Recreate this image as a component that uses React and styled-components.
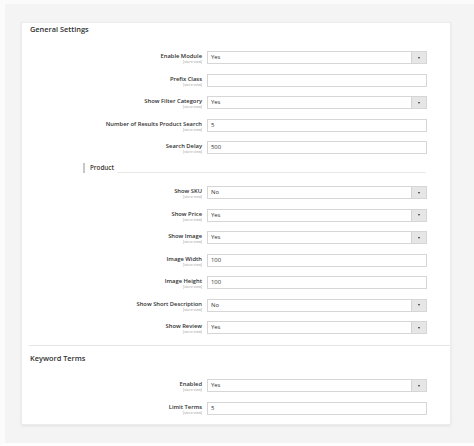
import React from "react";
import styled, { createGlobalStyle } from "styled-components";

const GlobalStyle = createGlobalStyle`
  html, body {
    margin: 0;
    padding: 0;
    background: #fbfbfb;
  }
  body {
    font-family: "Open Sans", "Liberation Sans", sans-serif;
    color: #303030;
  }
`;

const general = [
  { label: "Enable Module", type: "select", value: "Yes" },
  { label: "Prefix Class", type: "text", value: "" },
  { label: "Show Filter Category", type: "select", value: "Yes" },
  { label: "Number of Results Product Search", type: "text", value: "5" },
  { label: "Search Delay", type: "text", value: "500" },
];

const product = [
  { label: "Show SKU", type: "select", value: "No" },
  { label: "Show Price", type: "select", value: "Yes" },
  { label: "Show Image", type: "select", value: "Yes" },
  { label: "Image Width", type: "text", value: "100" },
  { label: "Image Height", type: "text", value: "100" },
  { label: "Show Short Description", type: "select", value: "No" },
  { label: "Show Review", type: "select", value: "Yes" },
];

const keyword = [
  { label: "Enabled", type: "select", value: "Yes" },
  { label: "Limit Terms", type: "text", value: "5" },
];

const Field = ({ label, type, value }) => (
  <Row>
    <LabelBox>
      <Label>{label}</Label>
      <Scope>[store view]</Scope>
    </LabelBox>
    {type === "select" ? (
      <Select>
        <Value>{value}</Value>
        <Arrow>
          <Dot />
        </Arrow>
      </Select>
    ) : (
      <Input>
        <Value>{value}</Value>
      </Input>
    )}
  </Row>
);

const App = () => {
  return (
    <>
      <GlobalStyle />
      <Page>
        <Card>
          <Title>General Settings</Title>
          <Fields $top={16}>
            {general.map(f => (
              <Field key={f.label} {...f} />
            ))}
          </Fields>
          <SubHeading>
            <SubTitle>Product</SubTitle>
            <SubLine />
          </SubHeading>
          <Fields $top={13.5}>
            {product.map(f => (
              <Field key={f.label} {...f} />
            ))}
          </Fields>
          <Divider />
          <Title $top={6}>Keyword Terms</Title>
          <Fields $top={15}>
            {keyword.map(f => (
              <Field key={f.label} {...f} />
            ))}
          </Fields>
        </Card>
      </Page>
    </>
  );
};

const Page = styled.div`
  width: 474px;
  height: 446px;
  box-sizing: border-box;
  margin: 0;
  border-top: 4px solid #fbfbfb;
  border-left: 5px solid #fbfbfb;
  border-bottom: 3px solid #fdfdfd;
  background: #f4f4f4;
  padding: 18px 0 0 16px;
  overflow: hidden;
`;

const Card = styled.div`
  width: 430px;
  box-sizing: border-box;
  padding-bottom: 9.5px;
  background: #fff;
  border: 1px solid #ececec;
  border-radius: 2px;
  box-shadow: 0 1px 3px rgba(0, 0, 0, 0.08);
`;

const Title = styled.div`
  margin-top: ${p => p.$top || 0}px;
  padding-left: 8px;
  height: 12px;
  line-height: 12px;
  font-size: 7.4px;
  font-weight: 600;
  color: #303030;
`;

const Fields = styled.div`
  margin-top: ${p => p.$top}px;
  display: flex;
  flex-direction: column;
  gap: 9.5px;
`;

const Row = styled.div`
  display: grid;
  grid-template-columns: 180px 220px;
  column-gap: 5px;
  height: 13px;
`;

const LabelBox = styled.div`
  display: flex;
  flex-direction: column;
  align-items: flex-end;
  padding-top: 1px;
`;

const Label = styled.span`
  font-size: 5.8px;
  line-height: 8px;
  font-weight: 600;
  color: #303030;
  white-space: nowrap;
`;

const Scope = styled.span`
  font-size: 3.5px;
  line-height: 4px;
  color: #9a9a9a;
  white-space: nowrap;
`;

const Input = styled.div`
  height: 13px;
  box-sizing: border-box;
  border: 1px solid #d6d6d6;
  background: #fff;
  display: flex;
  align-items: center;
`;

const Select = styled(Input)`
  justify-content: space-between;
`;

const Value = styled.span`
  padding-left: 3px;
  font-size: 5.9px;
  line-height: 11px;
  color: #303030;
`;

const Arrow = styled.div`
  width: 14px;
  height: 11px;
  background: #e6e6e6;
  border-left: 1px solid #d3d3d3;
  display: flex;
  align-items: center;
  justify-content: center;
`;

const Dot = styled.span`
  width: 0;
  height: 0;
  border-left: 1.5px solid transparent;
  border-right: 1.5px solid transparent;
  border-top: 2px solid #333;
`;

const SubHeading = styled.div`
  margin: 8.5px 24px 0 61px;
  display: flex;
  align-items: flex-end;
  height: 10px;
`;

const SubTitle = styled.div`
  border-left: 2px solid #c8c8c8;
  padding-left: 5px;
  padding-right: 3px;
  font-size: 6.3px;
  line-height: 10px;
  font-weight: 600;
  color: #41362f;
`;

const SubLine = styled.div`
  flex: 1;
  border-bottom: 1px solid #e8e8e8;
`;

const Divider = styled.div`
  margin: 11px 0 0 7px;
  border-top: 1px solid #e5e5e5;
`;

export default App;
